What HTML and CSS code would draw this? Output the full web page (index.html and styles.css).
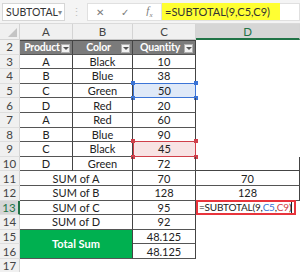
FILE: index.html
```html
<!DOCTYPE html>
<html lang="en">
<head>
    <meta charset="UTF-8">
    <title>SUBTOTAL example</title>
    <link rel="stylesheet" href="styles.css">
</head>
<body>
    <div class="formula-bar">
        <div class="name-box">SUBTOTAL<span class="caret">&#9662;</span></div>
        <div class="dots">&#8942;</div>
        <div class="fx-box">
            <span class="btn">&#10005;</span>
            <span class="btn">&#10003;</span>
            <span class="btn fx">f<sub>x</sub></span>
        </div>
        <div class="formula"><span class="hl">=SUBTOTAL(9,C5,C9)</span></div>
    </div>

    <div class="sheet">
        <div class="corner"><span class="tri"></span></div>
        <div class="col-h">A</div>
        <div class="col-h">B</div>
        <div class="col-h">C</div>
        <div class="col-h sel">D</div>

        <div class="row-h">2</div>
        <div class="cell th first top">Product<i class="flt"></i></div>
        <div class="cell th top">Color<i class="flt"></i></div>
        <div class="cell th top">Quantity<i class="flt"></i></div>
        <div class="blank"></div>

        <div class="row-h">3</div>
        <div class="cell first">A</div><div class="cell">Black</div><div class="cell">10</div><div class="blank"></div>
        <div class="row-h">4</div>
        <div class="cell first">B</div><div class="cell">Blue</div><div class="cell">38</div><div class="blank"></div>
        <div class="row-h">5</div>
        <div class="cell first">C</div><div class="cell">Green</div><div class="cell ref-blue">50<i class="h tl"></i><i class="h tr"></i><i class="h bl"></i><i class="h br"></i></div><div class="blank"></div>
        <div class="row-h">6</div>
        <div class="cell first">D</div><div class="cell">Red</div><div class="cell">20</div><div class="blank"></div>
        <div class="row-h">7</div>
        <div class="cell first">A</div><div class="cell">Red</div><div class="cell">60</div><div class="blank"></div>
        <div class="row-h">8</div>
        <div class="cell first">B</div><div class="cell">Blue</div><div class="cell">90</div><div class="blank"></div>
        <div class="row-h">9</div>
        <div class="cell first">C</div><div class="cell">Black</div><div class="cell ref-red">45<i class="h tl"></i><i class="h tr"></i><i class="h bl"></i><i class="h br"></i></div><div class="blank"></div>
        <div class="row-h">10</div>
        <div class="cell first">D</div><div class="cell">Green</div><div class="cell">72</div><div class="blank edge"></div>

        <div class="row-h">11</div>
        <div class="cell first span2">SUM of A</div><div class="cell">70</div><div class="cell">70</div>
        <div class="row-h">12</div>
        <div class="cell first span2">SUM of B</div><div class="cell">128</div><div class="cell">128</div>
        <div class="row-h sel">13</div>
        <div class="cell first span2">SUM of C</div><div class="cell">95</div>
        <div class="cell editing">=SUBTOTAL(9,<span class="c-blue">C5</span>,<span class="c-red">C9</span>)<i class="caret-line"></i></div>
        <div class="row-h">14</div>
        <div class="cell first span2">SUM of D</div><div class="cell">92</div><div class="blank"></div>

        <div class="row-h">15</div>
        <div class="cell first span2 rows2 total">Total Sum</div>
        <div class="cell">48.125</div><div class="blank"></div>
        <div class="row-h">16</div>
        <div class="cell">48.125</div><div class="blank"></div>

        <div class="row-h">17</div>
        <div class="blank"></div><div class="blank"></div><div class="blank"></div><div class="blank"></div>
    </div>
</body>
</html>
```

FILE: styles.css
```css
body {
    margin: 0;
    background-color: #ffffff;
    font-family: Lato, "Liberation Sans", sans-serif;
    font-size: 11px;
    color: #222222;
    overflow: hidden;
}

/* formula bar */
.formula-bar {
    display: flex;
    align-items: center;
    height: 24px;
    padding: 0 0 0 2px;
    background-color: #f4f4f4;
    border-bottom: 1px solid #dadada;
    box-sizing: border-box;
}
.name-box {
    display: flex;
    align-items: center;
    justify-content: space-between;
    width: 63px;
    height: 18px;
    padding: 0 3px 0 3px;
    box-sizing: border-box;
    background-color: #ffffff;
    border: 1px solid #d6d6d6;
    font-size: 10.5px;
    color: #333333;
}
.caret {
    font-size: 8px;
    color: #888888;
}
.dots {
    width: 22px;
    text-align: center;
    color: #c0c0c0;
    font-size: 11px;
}
.fx-box {
    display: flex;
    align-items: center;
    justify-content: space-around;
    width: 74px;
    height: 18px;
    background-color: #ffffff;
    border: 1px solid #e0e0e0;
    border-right: none;
    box-sizing: border-box;
}
.btn {
    color: #7a7a7a;
    font-size: 10px;
}
.fx {
    font-family: "Liberation Serif", serif;
    font-style: italic;
    font-size: 11px;
}
.fx sub {
    font-size: 7px;
}
.formula {
    flex: 1;
    height: 18px;
    display: flex;
    align-items: center;
    background-color: #ffffff;
    border: 1px solid #e0e0e0;
    box-sizing: border-box;
}
.hl {
    background-color: #ffff33;
    padding: 2px 10px 2px 3px;
    font-size: 11px;
    color: #333333;
}

/* grid */
.sheet {
    display: grid;
    grid-template-columns: 20px 53px 60px 63px minmax(0, 1fr);
    grid-template-rows: 16px repeat(16, 14.6px);
}
.corner {
    position: relative;
    background-color: #f0f0f0;
    border-right: 1px solid #d4d4d4;
    border-bottom: 1px solid #d4d4d4;
}
.tri {
    position: absolute;
    right: 2px;
    bottom: 2px;
    width: 0;
    height: 0;
    border-left: 9px solid transparent;
    border-bottom: 9px solid #c4c4c4;
}
.col-h {
    display: flex;
    align-items: center;
    justify-content: center;
    background-color: #f0f0f0;
    border-right: 1px solid #d4d4d4;
    border-bottom: 1px solid #c8c8c8;
    color: #444444;
    font-size: 11.5px;
}
.col-h.sel {
    background-color: #d6d6d6;
    color: #217346;
    border-bottom: 2px solid #217346;
}
.row-h {
    display: flex;
    align-items: center;
    justify-content: center;
    background-color: #f0f0f0;
    border-right: 1px solid #d4d4d4;
    border-bottom: 1px solid #dedede;
    color: #444444;
    font-size: 11.5px;
}
.row-h.sel {
    background-color: #d6d6d6;
    color: #217346;
    border-right: 2px solid #217346;
}

.cell {
    position: relative;
    display: flex;
    align-items: center;
    justify-content: center;
    min-width: 0;
    border-right: 1px solid #444444;
    border-bottom: 1px solid #555555;
    white-space: nowrap;
}
.cell.top {
    border-top: 1px solid #444444;
}
.blank.edge {
    border-right: 1px solid #444444;
    border-bottom: 1px solid #444444;
}
.span2 {
    grid-column: span 2;
}
.rows2 {
    grid-row: span 2;
}

.th {
    background-color: #7b7b7b;
    color: #ffffff;
    font-weight: bold;
    font-size: 10.5px;
    overflow: hidden;
    padding-right: 8px;
    letter-spacing: -0.2px;
}
.flt {
    position: absolute;
    right: 2px;
    top: 3px;
    width: 9px;
    height: 9px;
    background-color: #f2f2f2;
    border: 1px solid #b0b0b0;
    box-sizing: border-box;
}
.flt::after {
    content: '';
    position: absolute;
    left: 1px;
    top: 2px;
    border-left: 3px solid transparent;
    border-right: 3px solid transparent;
    border-top: 3px solid #555555;
}

.ref-blue {
    background-color: #dfe9f8;
    border: 1px solid #3b74d6;
    margin-top: -1px;
}
.ref-red {
    background-color: #f8e3e4;
    border: 1px solid #cf3f4a;
    margin-top: -1px;
}
.h {
    position: absolute;
    width: 4px;
    height: 4px;
}
.ref-blue .h { background-color: #3b74d6; }
.ref-red .h { background-color: #cf3f4a; }
.tl { left: -3px; top: -3px; }
.tr { right: -3px; top: -3px; }
.bl { left: -3px; bottom: -3px; }
.br { right: -3px; bottom: -3px; }

.total {
    background-color: #00b050;
    color: #ffffff;
    font-weight: bold;
}

.editing {
    justify-content: flex-start;
    padding-left: 1px;
    border: 2px solid #e8343c;
    margin: -1px 4px 0 0;
    font-size: 10px;
    letter-spacing: -0.2px;
}
.c-blue { color: #3b74d6; }
.c-red { color: #cf3f4a; }
.caret-line {
    display: inline-block;
    width: 1px;
    height: 11px;
    background-color: #222222;
}
```
